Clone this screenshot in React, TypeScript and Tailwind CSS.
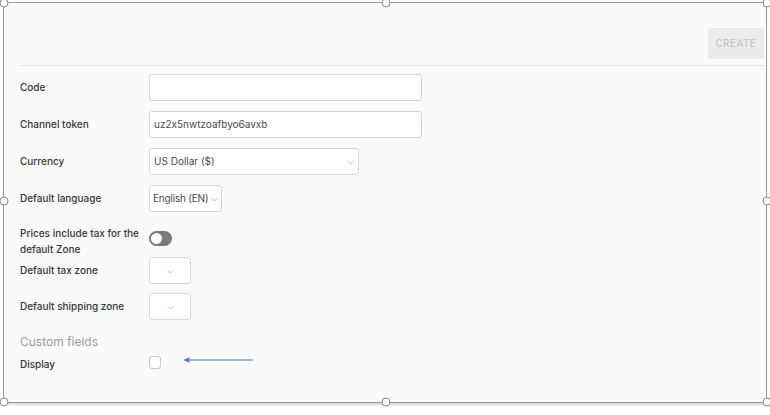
import React from "react";

const FONT = {
  fontFamily: "Inter, 'Open Sans', sans-serif",
  fontFeatureSettings: "'calt' 0",
};

export default function App() {
  return (
    <div
      className="relative h-[415px] w-[770px] overflow-hidden bg-white"
      style={FONT}
    >
      {/* Selected frame */}
      <div className="absolute left-[3px] top-[2px] h-[401px] w-[764px] border-[1.5px] border-[#9a9a9a] bg-[#fafafa] shadow-[0_2px_1px_rgba(0,0,0,0.12)]">
        <div className="flex h-full flex-col pl-[16px] pr-[2px]">
          {/* Header */}
          <div className="flex justify-end pt-[25px]">
            <button
              type="button"
              disabled
              className="h-[31px] w-[56px] rounded-[2px] bg-[#ebebeb] text-[10px] tracking-[0.08em] text-[#c2c2c2]"
              style={{ fontFamily: "Roboto, sans-serif" }}
            >
              CREATE
            </button>
          </div>
          <div className="mt-[6px] h-px bg-[#e2e2e6]" />

          <div className="mt-[8px] flex flex-col gap-[10px]">
            <Row label="Code">
              <TextBox width="w-[273px]" value="" />
            </Row>
            <Row label="Channel token">
              <TextBox width="w-[273px]" value="uz2x5nwtzoafbyo6avxb" />
            </Row>
            <Row label="Currency">
              <SelectBox width="w-[210px]" value="US Dollar ($)" />
            </Row>
            <Row label="Default language">
              <SelectBox width="w-[73px]" value="English (EN)" compact />
            </Row>
          </div>

          {/* Toggle row */}
          <div className="mt-[13px] flex items-start">
            <div className="w-[129px] text-[10px] font-medium leading-[16px] text-[#363636]">
              Prices include tax for the
              <br />
              default Zone
            </div>
            <div className="mt-[6px] flex h-[15px] w-[23px] items-center rounded-full bg-[#7a7a7a] px-[2px]">
              <div className="h-[11px] w-[11px] rounded-full bg-white" />
            </div>
          </div>

          <div className="flex flex-col gap-[9px]">
            <Row label="Default tax zone">
              <SelectBox width="w-[42px]" value="" />
            </Row>
            <Row label="Default shipping zone">
              <SelectBox width="w-[42px]" value="" />
            </Row>
          </div>

          <div className="mt-[14px] text-[12px] leading-[16px] text-[#9c9c9c]">
            Custom fields
          </div>

          <div className="mt-[2px] flex items-center">
            <div className="mt-[5px] w-[129px] text-[10px] font-medium text-[#363636]">
              Display
            </div>
            <div className="h-[13px] w-[12px] rounded-[3px] border border-[#c8c8c8] bg-white" />
            <svg
              width="72"
              height="8"
              viewBox="0 0 72 8"
              className="ml-[22px] mt-[-4px]"
            >
              <line x1="3" y1="4" x2="70" y2="4" stroke="#4472c4" strokeWidth="1.2" />
              <path d="M0 4 L7 1.2 L5.5 4 L7 6.8 Z" fill="#4472c4" />
            </svg>
          </div>
        </div>
      </div>

      {/* Handles */}
      <Handle x={4} y={3} />
      <Handle x={386} y={3} />
      <Handle x={767} y={3} />
      <Handle x={4} y={201} />
      <Handle x={767} y={201} />
      <Handle x={4} y={402} />
      <Handle x={386} y={402} />
      <Handle x={767} y={402} />
    </div>
  );
}

function Row({
  label,
  children,
}: {
  label: string;
  children: React.ReactNode;
}) {
  return (
    <div className="flex items-center">
      <div className="w-[129px] text-[10px] font-medium text-[#363636]">
        {label}
      </div>
      {children}
    </div>
  );
}

function TextBox({ width, value }: { width: string; value: string }) {
  return (
    <div
      className={`flex h-[27px] items-center rounded-[3px] border border-[#d6d6da] bg-white px-[4px] text-[10px] text-[#4a4a4a] ${width}`}
    >
      {value}
    </div>
  );
}

function SelectBox({
  width,
  value,
  compact = false,
}: {
  width: string;
  value: string;
  compact?: boolean;
}) {
  const spacing = compact
    ? "px-[3px] gap-[2px] tracking-[-0.02em]"
    : "px-[4px] gap-[4px]";
  return (
    <div
      className={`flex h-[27px] items-center whitespace-nowrap rounded-[3px] border border-[#d6d6da] bg-white text-[10px] text-[#4a4a4a] ${spacing} ${value ? "justify-between" : "justify-center"} ${width}`}
    >
      {value && <span>{value}</span>}
      <Chevron />
    </div>
  );
}

function Chevron() {
  return (
    <svg width="7" height="5" viewBox="0 0 7 5" className="mt-[2px] shrink-0">
      <path d="M0.5 1 L3.5 4 L6.5 1" fill="none" stroke="#b4b4b4" strokeWidth="0.8" />
    </svg>
  );
}

function Handle({ x, y }: { x: number; y: number }) {
  return (
    <div
      className="absolute h-[9px] w-[9px] -translate-x-1/2 -translate-y-1/2 rounded-full border-[1.5px] border-[#8a8a8a] bg-white"
      style={{ left: x, top: y }}
    />
  );
}
